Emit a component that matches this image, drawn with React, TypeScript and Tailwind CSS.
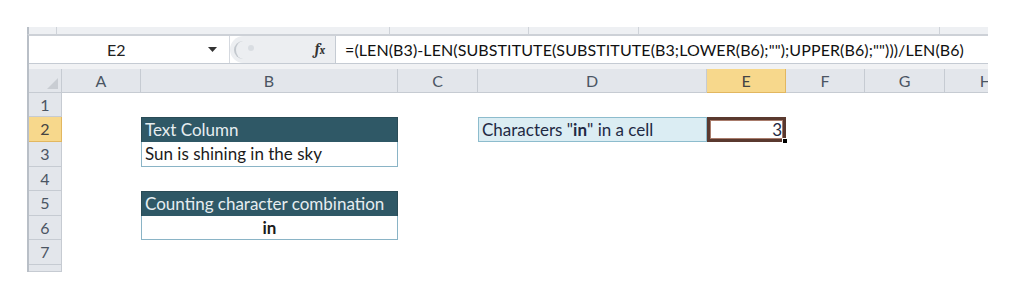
import React from 'react';

const font = { fontFamily: 'Lato, "Liberation Sans", sans-serif' };

const cols = [
  { key: 'A', w: 'w-[79px]' },
  { key: 'B', w: 'w-[257px]' },
  { key: 'C', w: 'w-[80px]' },
  { key: 'D', w: 'w-[229px]' },
  { key: 'E', w: 'w-[79px]' },
  { key: 'F', w: 'w-[79px]' },
  { key: 'G', w: 'w-[80px]' },
  { key: 'H', w: 'w-[43px]' },
];

const rows = [
  { n: '1', h: 'h-[24px]' },
  { n: '2', h: 'h-[25px]' },
  { n: '3', h: 'h-[25px]' },
  { n: '4', h: 'h-[24px]' },
  { n: '5', h: 'h-[25px]' },
  { n: '6', h: 'h-[24px]' },
  { n: '7', h: 'h-[25px]' },
  { n: '', h: 'h-[7px]' },
];

function FormulaBar() {
  return (
    <div className="flex h-[28px] border-b border-[#c5cbd3] bg-white">
      <div className="flex w-[201px] items-center border-r border-[#d5d9df] pl-[78px] pr-2">
        <span className="flex-1 text-[16px] text-[#222]">E2</span>
        <svg width="9" height="6" viewBox="0 0 9 6" className="mr-[4px]">
          <path d="M0 0 H9 L4.5 5 Z" fill="#333" />
        </svg>
      </div>
      <div className="flex w-[105px] items-center rounded-l-full bg-[#eceef1] pl-[4px] pr-[10px]">
        <div className="h-[18px] w-[14px] rounded-l-full border-l-2 border-[#c3c8ce]" />
        <div className="mt-[-4px] h-[6px] w-[6px] rounded-full bg-[#d9dde2]" />
        <span className="ml-auto font-serif text-[15px] font-bold italic text-[#333]">
          f<span className="text-[11px]">x</span>
        </span>
      </div>
      <div className="flex flex-1 items-center border-l border-[#c5cbd3] pl-[9px] text-[16px] tracking-[0.1px] text-[#111] whitespace-nowrap overflow-hidden">
        =(LEN(B3)-LEN(SUBSTITUTE(SUBSTITUTE(B3;LOWER(B6);"");UPPER(B6);"")))/LEN(B6)
      </div>
    </div>
  );
}

function Cell({ col, row }: { col: string; row: string }) {
  const id = col + row;
  if (id === 'B2')
    return (
      <div className="flex h-full items-center border border-b-0 border-[#2a4b56] bg-[#2f5866] pl-[3px] text-[17px] text-[#e6edf0]">
        Text Column
      </div>
    );
  if (id === 'B3')
    return (
      <div className="flex h-full items-center border border-t-0 border-[#8ab4c6] bg-white pl-[3px] text-[17px] text-[#1b1b1b]">
        Sun is shining in the sky
      </div>
    );
  if (id === 'B5')
    return (
      <div className="flex h-full items-center border border-b-0 border-[#2a4b56] bg-[#2f5866] pl-[3px] text-[17px] text-[#e6edf0]">
        Counting character combination
      </div>
    );
  if (id === 'B6')
    return (
      <div className="flex h-full items-center justify-center border border-t-0 border-[#8ab4c6] bg-white text-[17px] font-bold text-[#1b1b1b]">
        in
      </div>
    );
  if (id === 'D2')
    return (
      <div className="flex h-full items-center border border-[#8dbccd] bg-[#dbedf3] pl-[3px] text-[17px] text-[#1f2a44]">
        Characters "<b>in</b>" in a cell
      </div>
    );
  if (id === 'E2')
    return (
      <div className="relative flex h-full items-center justify-end border-[3px] border-[#5a392f] bg-white pr-[1px] text-[17px] text-[#1f2a44] shadow-[inset_0_0_0_1px_#a97c6c]">
        3
        <div className="absolute bottom-[-5px] right-[-5px] h-[6px] w-[6px] border border-white bg-black" />
      </div>
    );
  return null;
}

export default function App() {
  return (
    <div className="h-[294px] w-[1024px] overflow-hidden bg-white" style={font}>
      <div className="ml-[27px] mt-[27px] w-[961px]">
        <div className="flex h-[7px] border-l-2 border-[#b9bfc7] bg-[#eef0f3]">
          <div className="w-[28px] border-r border-[#cfd3d9]" />
          <div className="w-[333px] border-r border-[#cfd3d9]" />
          <div className="w-[139px] border-r border-[#cfd3d9]" />
          <div className="w-[110px] border-r border-[#cfd3d9]" />
          <div className="w-[301px] border-r border-[#cfd3d9]" />
          <div className="flex-1" />
        </div>
        <div className="border-t-2 border-[#cdd1d7] border-l-2 border-l-[#b9bfc7]">
          <FormulaBar />
        </div>
        <div className="h-[5px] border-l-2 border-[#b9bfc7] bg-[#f1f2f4]" />
        <div className="flex border-l-2 border-[#b9bfc7]">
          <div className="flex w-[33px] flex-col">
            <div className="flex h-[24px] items-end justify-end border-b border-r border-[#c6cbd2] bg-[#e3e6eb] p-[3px]">
              <svg width="11" height="11" viewBox="0 0 11 11">
                <path d="M11 0 V11 H0 Z" fill="#c9cdd3" />
              </svg>
            </div>
            {rows.map(r => (
              <div
                key={r.n + r.h}
                className={`${r.h} flex items-center justify-center border-b border-r text-[16px] ${
                  r.n === '2'
                    ? 'border-[#e2b760] bg-[#f7d88c] text-[#444]'
                    : 'border-[#c6cbd2] bg-[#e3e6eb] text-[#4b5563]'
                }`}
              >
                {r.n}
              </div>
            ))}
          </div>
          {cols.map(c => (
            <div key={c.key} className={`${c.w} flex flex-col`}>
              <div
                className={`flex h-[24px] items-center justify-center overflow-hidden border-b border-r text-[16px] ${
                  c.key === 'E'
                    ? 'border-[#e2b760] bg-[#f7d88c] text-[#444]'
                    : 'border-[#c6cbd2] bg-[#e3e6eb] text-[#4b5563]'
                } ${c.key === 'H' ? 'justify-end border-r-0' : ''}`}
              >
                {c.key === 'H' ? <span className="mr-[-4px]">H</span> : c.key}
              </div>
              {rows.map(r => (
                <div key={r.n + r.h} className={`${r.h} bg-white`}>
                  {r.n && <Cell col={c.key} row={r.n} />}
                </div>
              ))}
            </div>
          ))}
        </div>
      </div>
    </div>
  );
}
